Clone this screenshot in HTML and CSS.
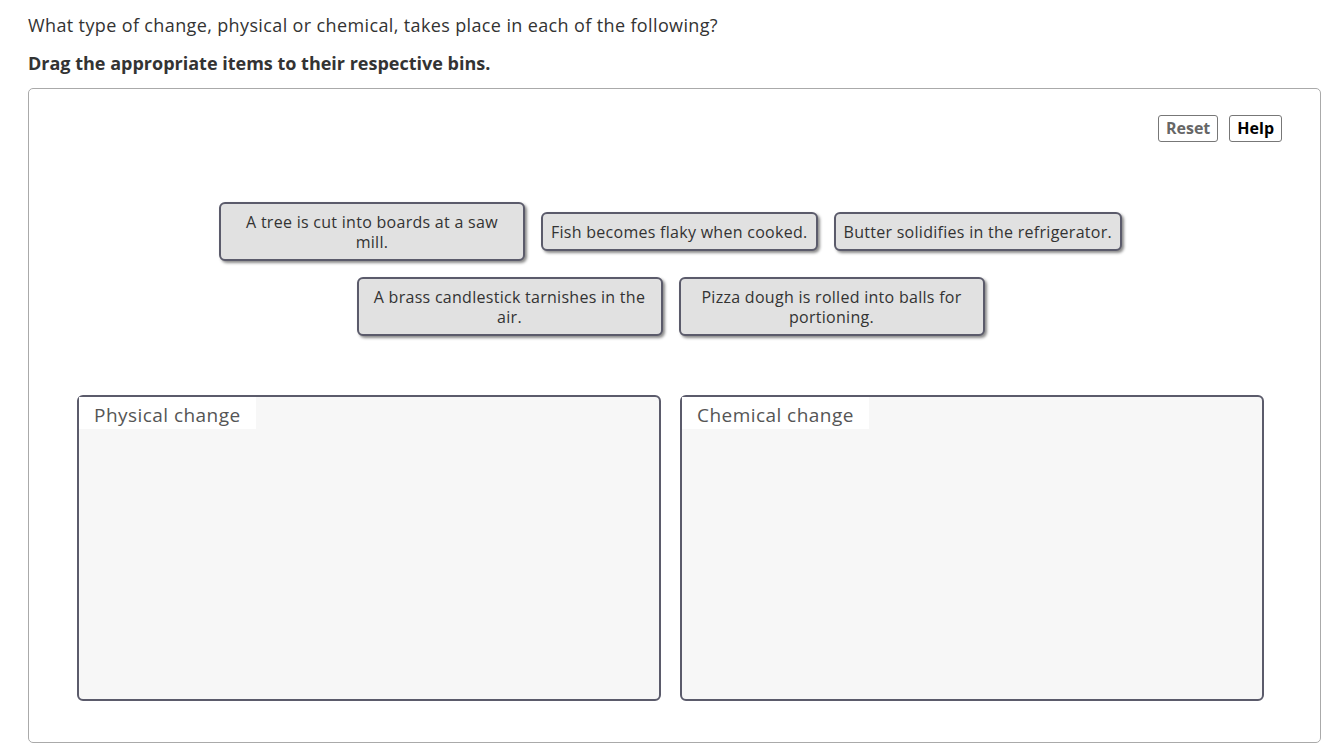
FILE: index.html
```html
<!DOCTYPE html>
<html lang="en">
<head>
  <meta charset="UTF-8">
  <title>Drag and drop</title>
  <link rel="stylesheet" href="styles.css">
</head>
<body>
  <p class="question">What type of change, physical or chemical, takes place in each of the following?</p>
  <p class="instruction">Drag the appropriate items to their respective bins.</p>
  <div class="dnd-panel">
    <div class="dnd-toolbar">
      <button class="tool-btn reset" disabled>Reset</button>
      <button class="tool-btn help">Help</button>
    </div>
    <div class="dnd-items">
      <div class="dnd-item">A tree is cut into boards at a saw mill.</div>
      <div class="dnd-item">Fish becomes flaky when cooked.</div>
      <div class="dnd-item">Butter solidifies in the refrigerator.</div>
      <div class="dnd-item">A brass candlestick tarnishes in the air.</div>
      <div class="dnd-item">Pizza dough is rolled into balls for portioning.</div>
    </div>
    <div class="dnd-bins">
      <div class="dnd-bin">
        <span class="bin-label">Physical change</span>
      </div>
      <div class="dnd-bin">
        <span class="bin-label">Chemical change</span>
      </div>
    </div>
  </div>
</body>
</html>
```
FILE: styles.css
```css
body {
  margin: 0;
  padding: 12px 22px 0 28px;
  font-family: 'Open Sans', 'Noto Sans CJK KR', sans-serif;
  font-size: 18px;
  color: #333;
  background: #fff;
}
.question {
  margin: 0;
  line-height: 26px;
  letter-spacing: 0.37px;
}
.instruction {
  margin: 12px 0 0 0;
  line-height: 26px;
  font-weight: bold;
}
.dnd-panel {
  margin-top: 12px;
  border: 1px solid #aaa;
  border-radius: 5px;
  height: 655px;
  box-sizing: border-box;
  padding: 26px 38px 0 48px;
}
.dnd-toolbar {
  display: flex;
  justify-content: flex-end;
  gap: 11px;
}
.tool-btn {
  font-family: inherit;
  font-size: 16px;
  font-weight: bold;
  background: #fff;
  border: 1px solid #777;
  border-radius: 3px;
  height: 27px;
  padding: 0 7px;
  line-height: 25px;
  color: #000;
}
.tool-btn.reset {
  color: #666;
}
.dnd-items {
  display: flex;
  flex-wrap: wrap;
  justify-content: center;
  align-items: center;
  gap: 16px;
  margin: 60px 18px 0 0;
  padding: 0 93px;
}
.dnd-item {
  max-width: 306px;
  box-sizing: border-box;
  padding: 8px 8px 7px 8px;
  background: #e1e1e1;
  border: 2px solid #5b5b6b;
  border-radius: 6px;
  box-shadow: 2px 2px 3px #8a8a8a;
  text-align: center;
  font-size: 16px;
  line-height: 20px;
  letter-spacing: 0.28px;
  color: #333;
}
.dnd-bins {
  display: flex;
  gap: 19px;
  margin: 59px 18px 0 0;
}
.dnd-bin {
  flex: 1;
  height: 306px;
  box-sizing: border-box;
  background: #f7f7f7;
  border: 2px solid #5b5b6b;
  border-radius: 6px;
}
.bin-label {
  display: inline-block;
  background: #fff;
  color: #555;
  font-size: 19px;
  line-height: 27px;
  letter-spacing: 0.45px;
  padding: 5px 15px 0 15px;
}
```
